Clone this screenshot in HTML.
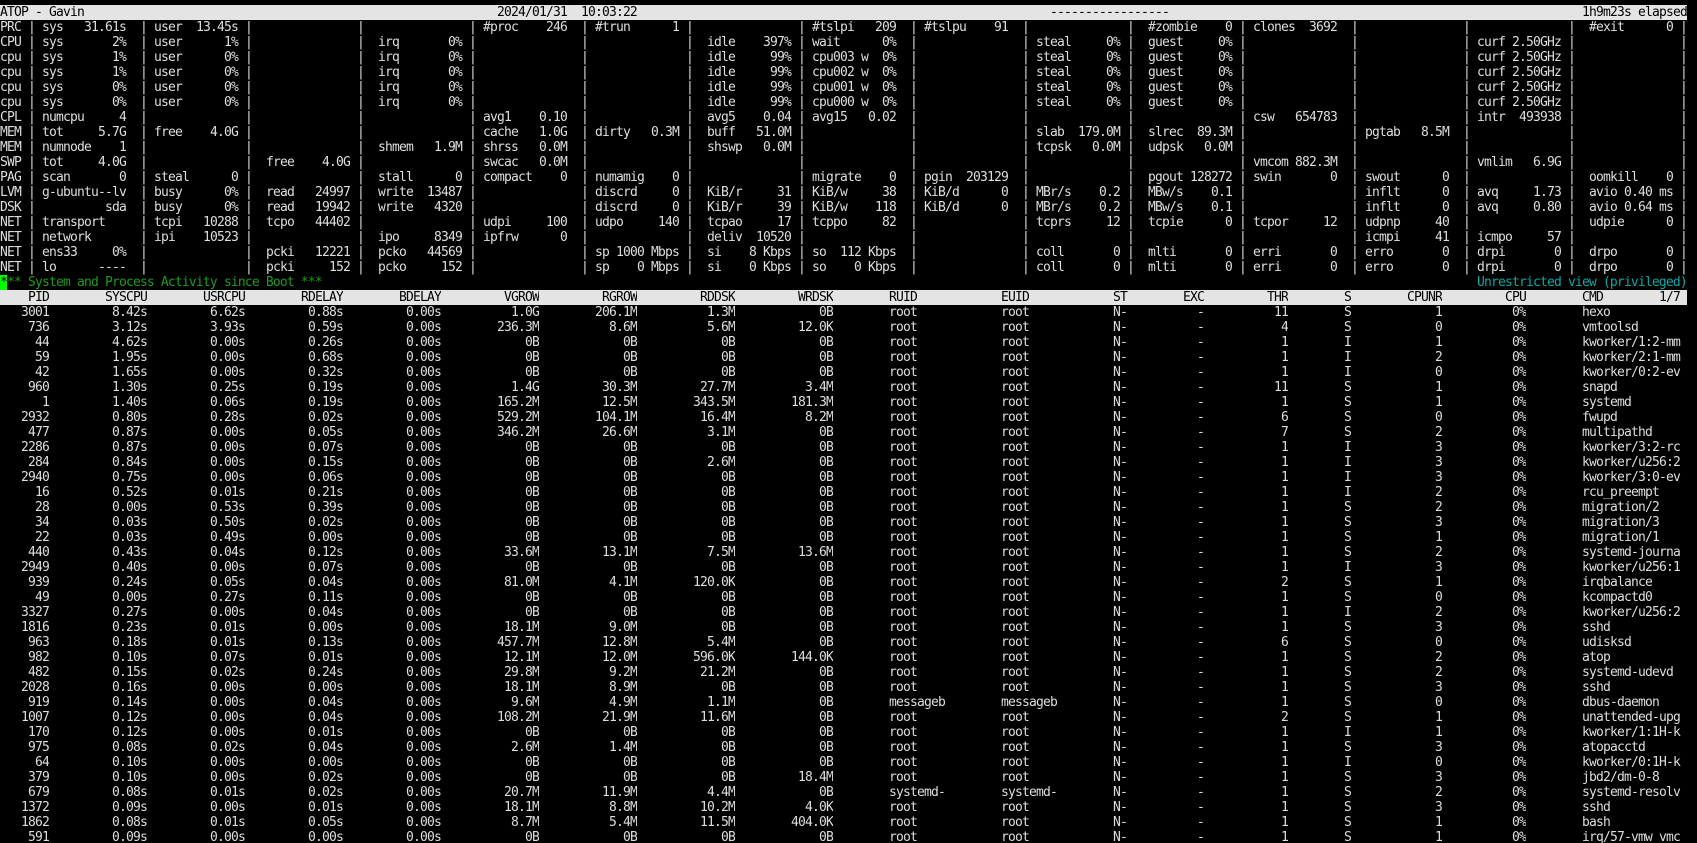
<!DOCTYPE html>
<html><head><meta charset="utf-8">
<style>
*{margin:0;padding:0;box-sizing:border-box}
html,body{width:1697px;height:843px;background:#000;overflow:hidden}
body{position:relative;font-family:"DejaVu Sans Mono","Liberation Mono",monospace;font-size:13px;letter-spacing:-0.83px;line-height:15px;color:#dedede}
.r{position:absolute;left:0;width:1697px;height:15px;white-space:pre}
.r p{position:absolute;left:0;top:0}
.f{position:absolute;top:0;width:84px;display:flex;justify-content:space-between;white-space:pre}
.f i,.f b{font-style:normal;font-weight:normal}
.a1{left:42px}.a2{left:154px}.a3{left:266px}.a4{left:378px}.a5{left:483px}.a6{left:595px}.a7{left:707px}.a8{left:812px}.a9{left:924px}.a10{left:1036px}.a11{left:1148px}.a12{left:1253px}.a13{left:1365px}.a14{left:1477px}.a15{left:1589px}
.bar{position:absolute;top:20px;width:7px}
.gray{position:absolute;left:0;width:1687px;height:15px;background:#e4e4e4}
.hd{color:#000}
.hd span{position:absolute;top:0;white-space:pre}
table{position:absolute;left:0;top:290px;width:1697px;border-collapse:collapse;table-layout:fixed}
td{padding:0;height:15px;line-height:15px;white-space:pre;overflow:hidden;text-align:right}
td:nth-child(10),td:nth-child(15),td:nth-child(18){text-align:left;padding-left:56px}
td:nth-child(11),td:nth-child(12){text-align:left}
tr.h td{color:#000}
</style></head><body>

<div class="gray" style="top:5px"></div>
<div class="r hd" style="top:5px"><span style="left:0">ATOP - Gavin</span><span style="left:497px">2024/01/31  10:03:22</span><span style="left:1050px">-----------------</span><span style="left:1582px">1h9m23s elapsed</span></div>

<div class="bar" style="left:28px">|<br>|<br>|<br>|<br>|<br>|<br>|<br>|<br>|<br>|<br>|<br>|<br>|<br>|<br>|<br>|<br>|</div>
<div class="bar" style="left:140px">|<br>|<br>|<br>|<br>|<br>|<br>|<br>|<br>|<br>|<br>|<br>|<br>|<br>|<br>|<br>|<br>|</div>
<div class="bar" style="left:245px">|<br>|<br>|<br>|<br>|<br>|<br>|<br>|<br>|<br>|<br>|<br>|<br>|<br>|<br>|<br>|<br>|</div>
<div class="bar" style="left:357px">|<br>|<br>|<br>|<br>|<br>|<br>|<br>|<br>|<br>|<br>|<br>|<br>|<br>|<br>|<br>|<br>|</div>
<div class="bar" style="left:469px">|<br>|<br>|<br>|<br>|<br>|<br>|<br>|<br>|<br>|<br>|<br>|<br>|<br>|<br>|<br>|<br>|</div>
<div class="bar" style="left:581px">|<br>|<br>|<br>|<br>|<br>|<br>|<br>|<br>|<br>|<br>|<br>|<br>|<br>|<br>|<br>|<br>|</div>
<div class="bar" style="left:686px">|<br>|<br>|<br>|<br>|<br>|<br>|<br>|<br>|<br>|<br>|<br>|<br>|<br>|<br>|<br>|<br>|</div>
<div class="bar" style="left:798px">|<br>|<br>|<br>|<br>|<br>|<br>|<br>|<br>|<br>|<br>|<br>|<br>|<br>|<br>|<br>|<br>|</div>
<div class="bar" style="left:910px">|<br>|<br>|<br>|<br>|<br>|<br>|<br>|<br>|<br>|<br>|<br>|<br>|<br>|<br>|<br>|<br>|</div>
<div class="bar" style="left:1022px">|<br>|<br>|<br>|<br>|<br>|<br>|<br>|<br>|<br>|<br>|<br>|<br>|<br>|<br>|<br>|<br>|</div>
<div class="bar" style="left:1127px">|<br>|<br>|<br>|<br>|<br>|<br>|<br>|<br>|<br>|<br>|<br>|<br>|<br>|<br>|<br>|<br>|</div>
<div class="bar" style="left:1239px">|<br>|<br>|<br>|<br>|<br>|<br>|<br>|<br>|<br>|<br>|<br>|<br>|<br>|<br>|<br>|<br>|</div>
<div class="bar" style="left:1351px">|<br>|<br>|<br>|<br>|<br>|<br>|<br>|<br>|<br>|<br>|<br>|<br>|<br>|<br>|<br>|<br>|</div>
<div class="bar" style="left:1463px">|<br>|<br>|<br>|<br>|<br>|<br>|<br>|<br>|<br>|<br>|<br>|<br>|<br>|<br>|<br>|<br>|</div>
<div class="bar" style="left:1568px">|<br>|<br>|<br>|<br>|<br>|<br>|<br>|<br>|<br>|<br>|<br>|<br>|<br>|<br>|<br>|<br>|</div>
<div class="bar" style="left:1680px">|<br>|<br>|<br>|<br>|<br>|<br>|<br>|<br>|<br>|<br>|<br>|<br>|<br>|<br>|<br>|<br>|</div>

<div class="r" style="top:20px"><p>PRC</p><span class="f a1"><i>sys</i><b>31.61s</b></span><span class="f a2"><i>user</i><b>13.45s</b></span><span class="f a5"><i>#proc</i><b>246</b></span><span class="f a6"><i>#trun</i><b>1</b></span><span class="f a8"><i>#tslpi</i><b>209</b></span><span class="f a9"><i>#tslpu</i><b>91</b></span><span class="f a11"><i>#zombie</i><b>0</b></span><span class="f a12"><i>clones</i><b>3692</b></span><span class="f a15"><i>#exit</i><b>0</b></span></div>

<div class="r" style="top:35px"><p>CPU</p><span class="f a1"><i>sys</i><b>2%</b></span><span class="f a2"><i>user</i><b>1%</b></span><span class="f a4"><i>irq</i><b>0%</b></span><span class="f a7"><i>idle</i><b>397%</b></span><span class="f a8"><i>wait</i><b>0%</b></span><span class="f a10"><i>steal</i><b>0%</b></span><span class="f a11"><i>guest</i><b>0%</b></span><span class="f a14"><i>curf</i><b>2.50GHz</b></span></div>

<div class="r" style="top:50px"><p>cpu</p><span class="f a1"><i>sys</i><b>1%</b></span><span class="f a2"><i>user</i><b>0%</b></span><span class="f a4"><i>irq</i><b>0%</b></span><span class="f a7"><i>idle</i><b>99%</b></span><span class="f a8"><i>cpu003 w</i><b>0%</b></span><span class="f a10"><i>steal</i><b>0%</b></span><span class="f a11"><i>guest</i><b>0%</b></span><span class="f a14"><i>curf</i><b>2.50GHz</b></span></div>

<div class="r" style="top:65px"><p>cpu</p><span class="f a1"><i>sys</i><b>1%</b></span><span class="f a2"><i>user</i><b>0%</b></span><span class="f a4"><i>irq</i><b>0%</b></span><span class="f a7"><i>idle</i><b>99%</b></span><span class="f a8"><i>cpu002 w</i><b>0%</b></span><span class="f a10"><i>steal</i><b>0%</b></span><span class="f a11"><i>guest</i><b>0%</b></span><span class="f a14"><i>curf</i><b>2.50GHz</b></span></div>

<div class="r" style="top:80px"><p>cpu</p><span class="f a1"><i>sys</i><b>0%</b></span><span class="f a2"><i>user</i><b>0%</b></span><span class="f a4"><i>irq</i><b>0%</b></span><span class="f a7"><i>idle</i><b>99%</b></span><span class="f a8"><i>cpu001 w</i><b>0%</b></span><span class="f a10"><i>steal</i><b>0%</b></span><span class="f a11"><i>guest</i><b>0%</b></span><span class="f a14"><i>curf</i><b>2.50GHz</b></span></div>

<div class="r" style="top:95px"><p>cpu</p><span class="f a1"><i>sys</i><b>0%</b></span><span class="f a2"><i>user</i><b>0%</b></span><span class="f a4"><i>irq</i><b>0%</b></span><span class="f a7"><i>idle</i><b>99%</b></span><span class="f a8"><i>cpu000 w</i><b>0%</b></span><span class="f a10"><i>steal</i><b>0%</b></span><span class="f a11"><i>guest</i><b>0%</b></span><span class="f a14"><i>curf</i><b>2.50GHz</b></span></div>

<div class="r" style="top:110px"><p>CPL</p><span class="f a1"><i>numcpu</i><b>4</b></span><span class="f a5"><i>avg1</i><b>0.10</b></span><span class="f a7"><i>avg5</i><b>0.04</b></span><span class="f a8"><i>avg15</i><b>0.02</b></span><span class="f a12"><i>csw</i><b>654783</b></span><span class="f a14"><i>intr</i><b>493938</b></span></div>

<div class="r" style="top:125px"><p>MEM</p><span class="f a1"><i>tot</i><b>5.7G</b></span><span class="f a2"><i>free</i><b>4.0G</b></span><span class="f a5"><i>cache</i><b>1.0G</b></span><span class="f a6"><i>dirty</i><b>0.3M</b></span><span class="f a7"><i>buff</i><b>51.0M</b></span><span class="f a10"><i>slab</i><b>179.0M</b></span><span class="f a11"><i>slrec</i><b>89.3M</b></span><span class="f a13"><i>pgtab</i><b>8.5M</b></span></div>

<div class="r" style="top:140px"><p>MEM</p><span class="f a1"><i>numnode</i><b>1</b></span><span class="f a4"><i>shmem</i><b>1.9M</b></span><span class="f a5"><i>shrss</i><b>0.0M</b></span><span class="f a7"><i>shswp</i><b>0.0M</b></span><span class="f a10"><i>tcpsk</i><b>0.0M</b></span><span class="f a11"><i>udpsk</i><b>0.0M</b></span></div>

<div class="r" style="top:155px"><p>SWP</p><span class="f a1"><i>tot</i><b>4.0G</b></span><span class="f a3"><i>free</i><b>4.0G</b></span><span class="f a5"><i>swcac</i><b>0.0M</b></span><span class="f a12"><i>vmcom</i><b>882.3M</b></span><span class="f a14"><i>vmlim</i><b>6.9G</b></span></div>

<div class="r" style="top:170px"><p>PAG</p><span class="f a1"><i>scan</i><b>0</b></span><span class="f a2"><i>steal</i><b>0</b></span><span class="f a4"><i>stall</i><b>0</b></span><span class="f a5"><i>compact</i><b>0</b></span><span class="f a6"><i>numamig</i><b>0</b></span><span class="f a8"><i>migrate</i><b>0</b></span><span class="f a9"><i>pgin</i><b>203129</b></span><span class="f a11"><i>pgout</i><b>128272</b></span><span class="f a12"><i>swin</i><b>0</b></span><span class="f a13"><i>swout</i><b>0</b></span><span class="f a15"><i>oomkill</i><b>0</b></span></div>

<div class="r" style="top:185px"><p>LVM</p><span class="f a1"><i>g-ubuntu--lv</i><b></b></span><span class="f a2"><i>busy</i><b>0%</b></span><span class="f a3"><i>read</i><b>24997</b></span><span class="f a4"><i>write</i><b>13487</b></span><span class="f a6"><i>discrd</i><b>0</b></span><span class="f a7"><i>KiB/r</i><b>31</b></span><span class="f a8"><i>KiB/w</i><b>38</b></span><span class="f a9"><i>KiB/d</i><b>0</b></span><span class="f a10"><i>MBr/s</i><b>0.2</b></span><span class="f a11"><i>MBw/s</i><b>0.1</b></span><span class="f a13"><i>inflt</i><b>0</b></span><span class="f a14"><i>avq</i><b>1.73</b></span><span class="f a15"><i>avio</i><b>0.40 ms</b></span></div>

<div class="r" style="top:200px"><p>DSK</p><span class="f a1"><i></i><b>sda</b></span><span class="f a2"><i>busy</i><b>0%</b></span><span class="f a3"><i>read</i><b>19942</b></span><span class="f a4"><i>write</i><b>4320</b></span><span class="f a6"><i>discrd</i><b>0</b></span><span class="f a7"><i>KiB/r</i><b>39</b></span><span class="f a8"><i>KiB/w</i><b>118</b></span><span class="f a9"><i>KiB/d</i><b>0</b></span><span class="f a10"><i>MBr/s</i><b>0.2</b></span><span class="f a11"><i>MBw/s</i><b>0.1</b></span><span class="f a13"><i>inflt</i><b>0</b></span><span class="f a14"><i>avq</i><b>0.80</b></span><span class="f a15"><i>avio</i><b>0.64 ms</b></span></div>

<div class="r" style="top:215px"><p>NET</p><span class="f a1"><i>transport</i><b></b></span><span class="f a2"><i>tcpi</i><b>10288</b></span><span class="f a3"><i>tcpo</i><b>44402</b></span><span class="f a5"><i>udpi</i><b>100</b></span><span class="f a6"><i>udpo</i><b>140</b></span><span class="f a7"><i>tcpao</i><b>17</b></span><span class="f a8"><i>tcppo</i><b>82</b></span><span class="f a10"><i>tcprs</i><b>12</b></span><span class="f a11"><i>tcpie</i><b>0</b></span><span class="f a12"><i>tcpor</i><b>12</b></span><span class="f a13"><i>udpnp</i><b>40</b></span><span class="f a15"><i>udpie</i><b>0</b></span></div>

<div class="r" style="top:230px"><p>NET</p><span class="f a1"><i>network</i><b></b></span><span class="f a2"><i>ipi</i><b>10523</b></span><span class="f a4"><i>ipo</i><b>8349</b></span><span class="f a5"><i>ipfrw</i><b>0</b></span><span class="f a7"><i>deliv</i><b>10520</b></span><span class="f a13"><i>icmpi</i><b>41</b></span><span class="f a14"><i>icmpo</i><b>57</b></span></div>

<div class="r" style="top:245px"><p>NET</p><span class="f a1"><i>ens33</i><b>0%</b></span><span class="f a3"><i>pcki</i><b>12221</b></span><span class="f a4"><i>pcko</i><b>44569</b></span><span class="f a6"><i>sp</i><b>1000 Mbps</b></span><span class="f a7"><i>si</i><b>8 Kbps</b></span><span class="f a8"><i>so</i><b>112 Kbps</b></span><span class="f a10"><i>coll</i><b>0</b></span><span class="f a11"><i>mlti</i><b>0</b></span><span class="f a12"><i>erri</i><b>0</b></span><span class="f a13"><i>erro</i><b>0</b></span><span class="f a14"><i>drpi</i><b>0</b></span><span class="f a15"><i>drpo</i><b>0</b></span></div>

<div class="r" style="top:260px"><p>NET</p><span class="f a1"><i>lo</i><b>----</b></span><span class="f a3"><i>pcki</i><b>152</b></span><span class="f a4"><i>pcko</i><b>152</b></span><span class="f a6"><i>sp</i><b>0 Mbps</b></span><span class="f a7"><i>si</i><b>0 Kbps</b></span><span class="f a8"><i>so</i><b>0 Kbps</b></span><span class="f a10"><i>coll</i><b>0</b></span><span class="f a11"><i>mlti</i><b>0</b></span><span class="f a12"><i>erri</i><b>0</b></span><span class="f a13"><i>erro</i><b>0</b></span><span class="f a14"><i>drpi</i><b>0</b></span><span class="f a15"><i>drpo</i><b>0</b></span></div>

<div class="r" style="top:275px"><span style="position:absolute;left:0;background:#00ff00;color:#000;width:7px;height:15px">*</span><span style="position:absolute;left:7px;color:#1f9a1f">** System and Process Activity since Boot ***</span><span style="position:absolute;left:1477px;color:#0aa8a8">Unrestricted view (privileged)</span></div>

<div class="gray" style="top:290px"></div>
<div class="r hd" style="top:290px"><span style="left:1659px">1/7</span></div>

<table>
<colgroup><col style="width:49px"><col style="width:98px"><col style="width:98px"><col style="width:98px"><col style="width:98px"><col style="width:98px"><col style="width:98px"><col style="width:98px"><col style="width:98px"><col style="width:168px"><col style="width:112px"><col style="width:42px"><col style="width:49px"><col style="width:84px"><col style="width:84px"><col style="width:70px"><col style="width:84px"><col style="width:171px"></colgroup>
<tr class="h"><td>PID<td>SYSCPU<td>USRCPU<td>RDELAY<td>BDELAY<td>VGROW<td>RGROW<td>RDDSK<td>WRDSK<td>RUID<td>EUID<td>ST<td>EXC<td>THR<td>S<td>CPUNR<td>CPU<td>CMD</tr>
<tr><td>3001<td>8.42s<td>6.62s<td>0.88s<td>0.00s<td>1.0G<td>206.1M<td>1.3M<td>0B<td>root<td>root<td>N-<td>-<td>11<td>S<td>1<td>0%<td>hexo</tr>
<tr><td>736<td>3.12s<td>3.93s<td>0.59s<td>0.00s<td>236.3M<td>8.6M<td>5.6M<td>12.0K<td>root<td>root<td>N-<td>-<td>4<td>S<td>0<td>0%<td>vmtoolsd</tr>
<tr><td>44<td>4.62s<td>0.00s<td>0.26s<td>0.00s<td>0B<td>0B<td>0B<td>0B<td>root<td>root<td>N-<td>-<td>1<td>I<td>1<td>0%<td>kworker/1:2-mm</tr>
<tr><td>59<td>1.95s<td>0.00s<td>0.68s<td>0.00s<td>0B<td>0B<td>0B<td>0B<td>root<td>root<td>N-<td>-<td>1<td>I<td>2<td>0%<td>kworker/2:1-mm</tr>
<tr><td>42<td>1.65s<td>0.00s<td>0.32s<td>0.00s<td>0B<td>0B<td>0B<td>0B<td>root<td>root<td>N-<td>-<td>1<td>I<td>0<td>0%<td>kworker/0:2-ev</tr>
<tr><td>960<td>1.30s<td>0.25s<td>0.19s<td>0.00s<td>1.4G<td>30.3M<td>27.7M<td>3.4M<td>root<td>root<td>N-<td>-<td>11<td>S<td>1<td>0%<td>snapd</tr>
<tr><td>1<td>1.40s<td>0.06s<td>0.19s<td>0.00s<td>165.2M<td>12.5M<td>343.5M<td>181.3M<td>root<td>root<td>N-<td>-<td>1<td>S<td>1<td>0%<td>systemd</tr>
<tr><td>2932<td>0.80s<td>0.28s<td>0.02s<td>0.00s<td>529.2M<td>104.1M<td>16.4M<td>8.2M<td>root<td>root<td>N-<td>-<td>6<td>S<td>0<td>0%<td>fwupd</tr>
<tr><td>477<td>0.87s<td>0.00s<td>0.05s<td>0.00s<td>346.2M<td>26.6M<td>3.1M<td>0B<td>root<td>root<td>N-<td>-<td>7<td>S<td>2<td>0%<td>multipathd</tr>
<tr><td>2286<td>0.87s<td>0.00s<td>0.07s<td>0.00s<td>0B<td>0B<td>0B<td>0B<td>root<td>root<td>N-<td>-<td>1<td>I<td>3<td>0%<td>kworker/3:2-rc</tr>
<tr><td>284<td>0.84s<td>0.00s<td>0.15s<td>0.00s<td>0B<td>0B<td>2.6M<td>0B<td>root<td>root<td>N-<td>-<td>1<td>I<td>3<td>0%<td>kworker/u256:2</tr>
<tr><td>2940<td>0.75s<td>0.00s<td>0.06s<td>0.00s<td>0B<td>0B<td>0B<td>0B<td>root<td>root<td>N-<td>-<td>1<td>I<td>3<td>0%<td>kworker/3:0-ev</tr>
<tr><td>16<td>0.52s<td>0.01s<td>0.21s<td>0.00s<td>0B<td>0B<td>0B<td>0B<td>root<td>root<td>N-<td>-<td>1<td>I<td>2<td>0%<td>rcu_preempt</tr>
<tr><td>28<td>0.00s<td>0.53s<td>0.39s<td>0.00s<td>0B<td>0B<td>0B<td>0B<td>root<td>root<td>N-<td>-<td>1<td>S<td>2<td>0%<td>migration/2</tr>
<tr><td>34<td>0.03s<td>0.50s<td>0.02s<td>0.00s<td>0B<td>0B<td>0B<td>0B<td>root<td>root<td>N-<td>-<td>1<td>S<td>3<td>0%<td>migration/3</tr>
<tr><td>22<td>0.03s<td>0.49s<td>0.00s<td>0.00s<td>0B<td>0B<td>0B<td>0B<td>root<td>root<td>N-<td>-<td>1<td>S<td>1<td>0%<td>migration/1</tr>
<tr><td>440<td>0.43s<td>0.04s<td>0.12s<td>0.00s<td>33.6M<td>13.1M<td>7.5M<td>13.6M<td>root<td>root<td>N-<td>-<td>1<td>S<td>2<td>0%<td>systemd-journa</tr>
<tr><td>2949<td>0.40s<td>0.00s<td>0.07s<td>0.00s<td>0B<td>0B<td>0B<td>0B<td>root<td>root<td>N-<td>-<td>1<td>I<td>3<td>0%<td>kworker/u256:1</tr>
<tr><td>939<td>0.24s<td>0.05s<td>0.04s<td>0.00s<td>81.0M<td>4.1M<td>120.0K<td>0B<td>root<td>root<td>N-<td>-<td>2<td>S<td>1<td>0%<td>irqbalance</tr>
<tr><td>49<td>0.00s<td>0.27s<td>0.11s<td>0.00s<td>0B<td>0B<td>0B<td>0B<td>root<td>root<td>N-<td>-<td>1<td>S<td>0<td>0%<td>kcompactd0</tr>
<tr><td>3327<td>0.27s<td>0.00s<td>0.04s<td>0.00s<td>0B<td>0B<td>0B<td>0B<td>root<td>root<td>N-<td>-<td>1<td>I<td>2<td>0%<td>kworker/u256:2</tr>
<tr><td>1816<td>0.23s<td>0.01s<td>0.00s<td>0.00s<td>18.1M<td>9.0M<td>0B<td>0B<td>root<td>root<td>N-<td>-<td>1<td>S<td>3<td>0%<td>sshd</tr>
<tr><td>963<td>0.18s<td>0.01s<td>0.13s<td>0.00s<td>457.7M<td>12.8M<td>5.4M<td>0B<td>root<td>root<td>N-<td>-<td>6<td>S<td>0<td>0%<td>udisksd</tr>
<tr><td>982<td>0.10s<td>0.07s<td>0.01s<td>0.00s<td>12.1M<td>12.0M<td>596.0K<td>144.0K<td>root<td>root<td>N-<td>-<td>1<td>S<td>2<td>0%<td>atop</tr>
<tr><td>482<td>0.15s<td>0.02s<td>0.24s<td>0.00s<td>29.8M<td>9.2M<td>21.2M<td>0B<td>root<td>root<td>N-<td>-<td>1<td>S<td>2<td>0%<td>systemd-udevd</tr>
<tr><td>2028<td>0.16s<td>0.00s<td>0.00s<td>0.00s<td>18.1M<td>8.9M<td>0B<td>0B<td>root<td>root<td>N-<td>-<td>1<td>S<td>3<td>0%<td>sshd</tr>
<tr><td>919<td>0.14s<td>0.00s<td>0.04s<td>0.00s<td>9.6M<td>4.9M<td>1.1M<td>0B<td>messageb<td>messageb<td>N-<td>-<td>1<td>S<td>0<td>0%<td>dbus-daemon</tr>
<tr><td>1007<td>0.12s<td>0.00s<td>0.04s<td>0.00s<td>108.2M<td>21.9M<td>11.6M<td>0B<td>root<td>root<td>N-<td>-<td>2<td>S<td>1<td>0%<td>unattended-upg</tr>
<tr><td>170<td>0.12s<td>0.00s<td>0.01s<td>0.00s<td>0B<td>0B<td>0B<td>0B<td>root<td>root<td>N-<td>-<td>1<td>I<td>1<td>0%<td>kworker/1:1H-k</tr>
<tr><td>975<td>0.08s<td>0.02s<td>0.04s<td>0.00s<td>2.6M<td>1.4M<td>0B<td>0B<td>root<td>root<td>N-<td>-<td>1<td>S<td>3<td>0%<td>atopacctd</tr>
<tr><td>64<td>0.10s<td>0.00s<td>0.00s<td>0.00s<td>0B<td>0B<td>0B<td>0B<td>root<td>root<td>N-<td>-<td>1<td>I<td>0<td>0%<td>kworker/0:1H-k</tr>
<tr><td>379<td>0.10s<td>0.00s<td>0.02s<td>0.00s<td>0B<td>0B<td>0B<td>18.4M<td>root<td>root<td>N-<td>-<td>1<td>S<td>3<td>0%<td>jbd2/dm-0-8</tr>
<tr><td>679<td>0.08s<td>0.01s<td>0.02s<td>0.00s<td>20.7M<td>11.9M<td>4.4M<td>0B<td>systemd-<td>systemd-<td>N-<td>-<td>1<td>S<td>2<td>0%<td>systemd-resolv</tr>
<tr><td>1372<td>0.09s<td>0.00s<td>0.01s<td>0.00s<td>18.1M<td>8.8M<td>10.2M<td>4.0K<td>root<td>root<td>N-<td>-<td>1<td>S<td>3<td>0%<td>sshd</tr>
<tr><td>1862<td>0.08s<td>0.01s<td>0.05s<td>0.00s<td>8.7M<td>5.4M<td>11.5M<td>404.0K<td>root<td>root<td>N-<td>-<td>1<td>S<td>1<td>0%<td>bash</tr>
<tr><td>591<td>0.09s<td>0.00s<td>0.00s<td>0.00s<td>0B<td>0B<td>0B<td>0B<td>root<td>root<td>N-<td>-<td>1<td>S<td>1<td>0%<td>irq/57-vmw vmc</tr>
</table>
</body></html>
